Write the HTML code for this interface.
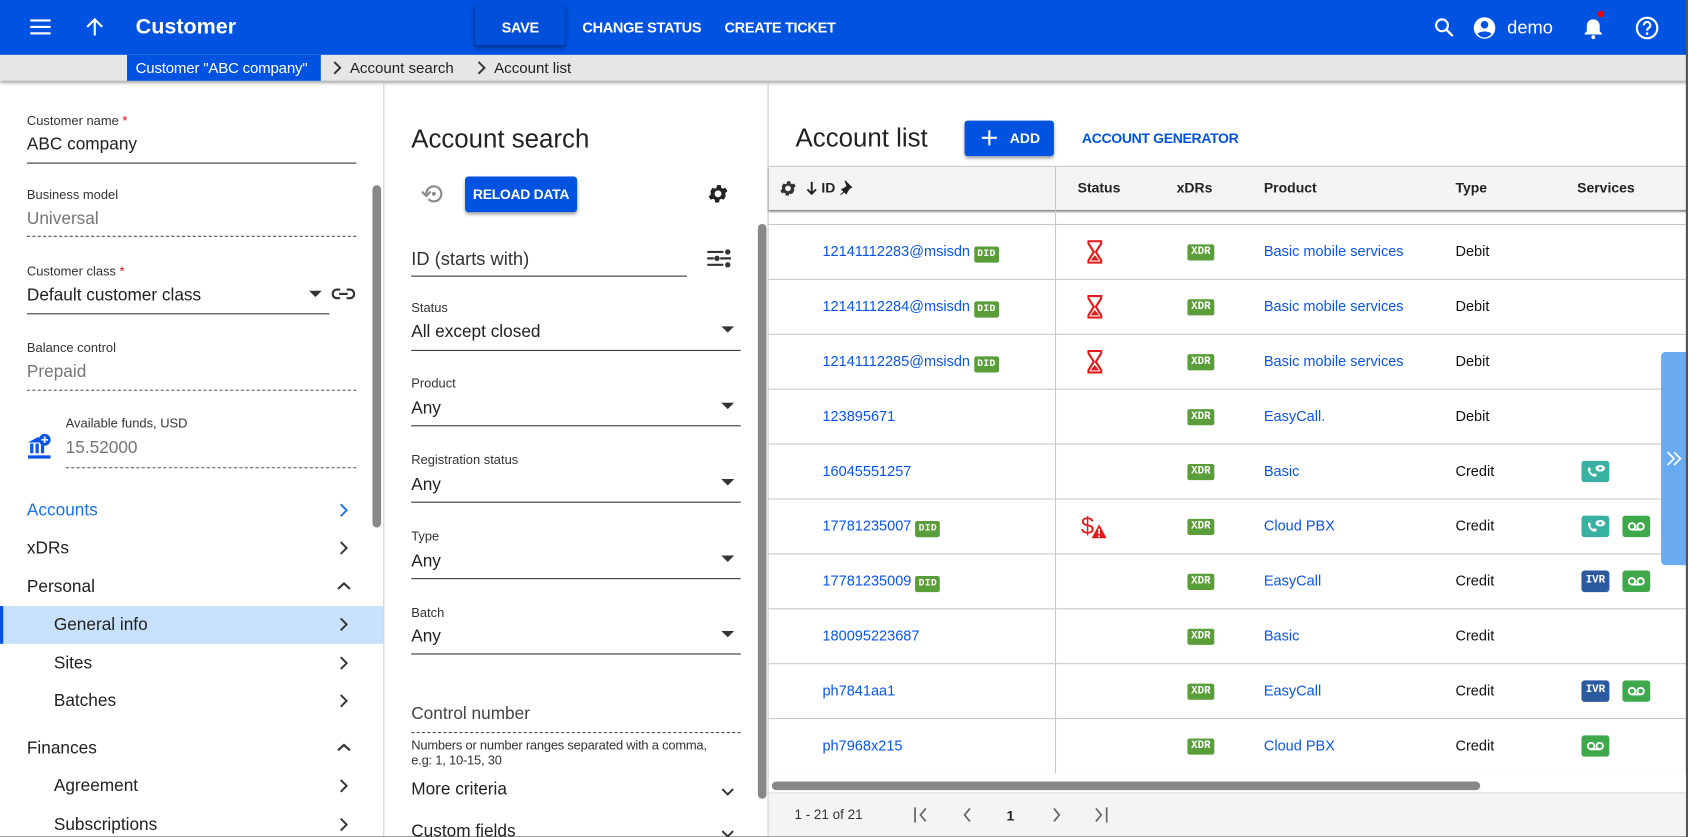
<!DOCTYPE html>
<html><head><meta charset="utf-8"><style>
html,body{margin:0;padding:0;width:1688px;height:837px;overflow:hidden;background:#fff}
#w{position:absolute;left:0;top:0;width:1568px;height:777.5px;transform:scale(1.07653);transform-origin:0 0;font-family:"Liberation Sans",Arial,sans-serif;color:#212121;overflow:hidden;border-bottom:1px solid #555;box-sizing:border-box}
.a{position:absolute;white-space:nowrap}
.top{left:0;top:0;width:1568px;height:51px;background:#0052e0}
.w{color:#fff}
.tb{font-size:13.5px;font-weight:bold;color:#fff;top:18px;letter-spacing:-.3px}
.lbl{font-size:12px;color:#333}
.val{font-size:16px;color:#212121}
.gv{font-size:16px;color:#757575}
.ul{height:1px;background:#333}
.dl{height:0;border-top:1px dashed #555}
.mi{font-size:16px}
.hd{font-size:13px;font-weight:bold;color:#222;top:167px}
.link{color:#0a55e8;font-size:13.5px}
.t{font-size:13.5px;color:#111}
.rl{left:714px;width:854px;height:1px;background:#c8c8c8}
.badge{display:inline-block;background:#5a9e3a;color:#fff;font-size:9px;font-weight:bold;font-family:"Liberation Mono",monospace;border-radius:2px;padding:2px 3px;letter-spacing:.3px;line-height:11px;vertical-align:0}
.xdr{width:25px;height:15px;background:#5a9e3a;color:#fff;font:bold 10px "Liberation Mono",monospace;text-align:center;line-height:15px;border-radius:2px}
</style></head><body><div id="w">
<svg width="0" height="0" style="position:absolute"><defs>
<symbol id="cr" viewBox="0 0 10 14"><path d="M2.5 1.5l5.5 5.5-5.5 5.5" stroke="#333" stroke-width="1.8" fill="none"/></symbol>
<symbol id="crb" viewBox="0 0 10 14"><path d="M2.5 1.5l5.5 5.5-5.5 5.5" stroke="#1a73e8" stroke-width="1.8" fill="none"/></symbol>
<symbol id="tri" viewBox="0 0 12 6"><path d="M0 0h12L6 6z" fill="#333"/></symbol>
<symbol id="vm" viewBox="0 0 26 20"><rect width="26" height="20" rx="3" fill="#3ea84a"/><circle cx="9" cy="10" r="3" stroke="#fff" stroke-width="1.8" fill="none"/><circle cx="17" cy="10" r="3" stroke="#fff" stroke-width="1.8" fill="none"/><path d="M9 13h8" stroke="#fff" stroke-width="1.8"/></symbol>
<symbol id="ph" viewBox="0 0 26 20"><rect width="26" height="20" rx="3" fill="#38b0a2"/><path d="M6 7c0 4 3 8 7 8l1.5-2-2.5-1.5-1 1c-1.5-.7-2.5-2-3-3l1-1L7.5 6z" fill="#fff"/><ellipse cx="17.5" cy="7" rx="4.5" ry="3" fill="#fff"/><circle cx="17.5" cy="7" r="1.3" fill="#38b0a2"/></symbol>
<symbol id="hg" viewBox="0 0 14 22"><path d="M1 1h12v2l-5 8 5 8v2H1v-2l5-8-5-8z" fill="none" stroke="#e31b1b" stroke-width="2"/><path d="M3 19l4-5 4 5z" fill="#e31b1b"/></symbol>
</defs></svg>
<div class="a top"></div>
<svg class="a" style="left:28px;top:17px" width="20" height="16"><rect y="1" width="19" height="2" fill="#fff"/><rect y="7" width="19" height="2" fill="#fff"/><rect y="13" width="19" height="2" fill="#fff"/></svg>
<svg class="a" style="left:79px;top:16px" width="18" height="18"><path d="M9 17V2M2 9l7-7 7 7" stroke="#fff" stroke-width="2" fill="none"/></svg>
<div class="a w" style="left:126px;top:14px;font-size:20px;font-weight:bold">Customer</div>
<div class="a" style="left:441px;top:3px;width:84px;height:39px;background:#004fd8;border-radius:3px;box-shadow:0 2px 4px rgba(0,0,0,.45)"></div>
<div class="a tb" style="left:466px">SAVE</div>
<div class="a tb" style="left:541px">CHANGE STATUS</div>
<div class="a tb" style="left:673px">CREATE TICKET</div>
<svg class="a" style="left:1332px;top:16px" width="19" height="19"><circle cx="7.5" cy="7.5" r="5.5" stroke="#fff" stroke-width="2" fill="none"/><path d="M11.5 11.5l6 6" stroke="#fff" stroke-width="2.2"/></svg>
<svg class="a" style="left:1368px;top:15px" width="22" height="22"><circle cx="11" cy="11" r="10" fill="#fff"/><circle cx="11" cy="8" r="3.5" fill="#0052e0"/><path d="M4.5 16.5c2-3 11-3 13 0a8 8 0 0 1-13 0z" fill="#0052e0"/></svg>
<div class="a w" style="left:1400px;top:16px;font-size:17px">demo</div>
<svg class="a" style="left:1470px;top:8px" width="22" height="30"><path d="M10 10c-4 0-6 3-6 6v5l-2 2v1h16v-1l-2-2v-5c0-3-2-6-6-6z" fill="#fff"/><circle cx="10" cy="26.5" r="1.8" fill="#fff"/><circle cx="17" cy="5" r="3" fill="#e00"/></svg>
<svg class="a" style="left:1519px;top:15px" width="22" height="22"><circle cx="11" cy="11" r="9.5" stroke="#fff" stroke-width="2" fill="none"/><path d="M8 8.5a3 3 0 1 1 4.5 2.5c-1.2.7-1.5 1.2-1.5 2.5" stroke="#fff" stroke-width="2" fill="none"/><circle cx="11" cy="16.2" r="1.2" fill="#fff"/></svg>
<div class="a" style="left:0;top:51px;width:1568px;height:24px;background:#e6e6e6;box-shadow:0 2px 3px rgba(0,0,0,.35)"></div>
<div class="a" style="left:118px;top:51px;width:180px;height:24px;background:#0052e0"></div>
<div class="a" style="left:126px;top:55px;font-size:14px;color:#fff;letter-spacing:-.2px">Customer "ABC company"</div>
<svg class="a" style="left:308px;top:56px" width="10" height="14"><use href="#cr"/></svg>
<div class="a" style="left:325px;top:55px;font-size:14px;color:#222">Account search</div>
<svg class="a" style="left:442px;top:56px" width="10" height="14"><use href="#cr"/></svg>
<div class="a" style="left:459px;top:55px;font-size:14px;color:#222">Account list</div>

<div class="a lbl" style="left:25px;top:105px">Customer name <span style="color:#d00">*</span></div>
<div class="a val" style="left:25px;top:126px">ABC company</div>
<div class="a ul" style="left:25px;top:151px;width:306px"></div>
<div class="a lbl" style="left:25px;top:174px">Business model</div>
<div class="a gv" style="left:25px;top:195px">Universal</div>
<div class="a dl" style="left:25px;top:219px;width:306px"></div>
<div class="a lbl" style="left:25px;top:245px">Customer class <span style="color:#d00">*</span></div>
<div class="a val" style="left:25px;top:266px">Default customer class</div>
<svg class="a" style="left:287px;top:270px" width="12" height="6"><use href="#tri"/></svg>
<svg class="a" style="left:308px;top:266px" width="22" height="14"><path d="M8 3H5a4 4 0 0 0 0 8h3M14 3h3a4 4 0 0 1 0 8h-3M7 7h8" stroke="#333" stroke-width="2" fill="none"/></svg>
<div class="a ul" style="left:25px;top:291px;width:281px"></div>
<div class="a lbl" style="left:25px;top:316px">Balance control</div>
<div class="a gv" style="left:25px;top:337px">Prepaid</div>
<div class="a dl" style="left:25px;top:362px;width:306px"></div>
<svg class="a" style="left:25px;top:402px" width="24" height="26"><path d="M1 9l9-5 4 2v3z" fill="#0a55e8"/><rect x="3" y="10" width="3" height="9" fill="#0a55e8"/><rect x="8" y="10" width="3" height="9" fill="#0a55e8"/><rect x="13" y="11" width="3" height="8" fill="#0a55e8"/><rect x="1" y="21" width="21" height="3" fill="#0a55e8"/><circle cx="16.5" cy="6.5" r="5.5" fill="#0a55e8"/><path d="M16.5 3.5v6M13.5 6.5h6" stroke="#fff" stroke-width="1.5"/></svg>
<div class="a lbl" style="left:61px;top:386px">Available funds, USD</div>
<div class="a gv" style="left:61px;top:408px">15.52000</div>
<div class="a dl" style="left:61px;top:434px;width:270px"></div>
<div class="a mi" style="left:25px;top:466px;color:#1a73e8">Accounts</div>
<svg class="a" style="left:314px;top:467px" width="10" height="14"><use href="#crb"/></svg>
<div class="a mi" style="left:25px;top:501px">xDRs</div><svg class="a" style="left:314px;top:502px" width="10" height="14"><use href="#cr"/></svg>
<div class="a mi" style="left:25px;top:537px">Personal</div><svg class="a" style="left:313px;top:540px" width="13" height="9"><path d="M1 7l5.5-5 5.5 5" stroke="#333" stroke-width="2" fill="none"/></svg>
<div class="a" style="left:0;top:563px;width:356px;height:35px;background:#c6e1f9"></div>
<div class="a" style="left:0;top:563px;width:3px;height:35px;background:#0052e0"></div>
<div class="a mi" style="left:50px;top:572px">General info</div><svg class="a" style="left:314px;top:573px" width="10" height="14"><use href="#cr"/></svg>
<div class="a mi" style="left:50px;top:608px">Sites</div><svg class="a" style="left:314px;top:609px" width="10" height="14"><use href="#cr"/></svg>
<div class="a mi" style="left:50px;top:643px">Batches</div><svg class="a" style="left:314px;top:644px" width="10" height="14"><use href="#cr"/></svg>
<div class="a mi" style="left:25px;top:687px">Finances</div><svg class="a" style="left:313px;top:690px" width="13" height="9"><path d="M1 7l5.5-5 5.5 5" stroke="#333" stroke-width="2" fill="none"/></svg>
<div class="a mi" style="left:50px;top:722px">Agreement</div><svg class="a" style="left:314px;top:723px" width="10" height="14"><use href="#cr"/></svg>
<div class="a mi" style="left:50px;top:758px">Subscriptions</div><svg class="a" style="left:314px;top:759px" width="10" height="14"><use href="#cr"/></svg>
<div class="a" style="left:346px;top:172px;width:8px;height:318px;background:#888;border-radius:4px"></div>

<div class="a" style="left:356px;top:76px;width:1px;height:702px;background:#d0d0d0"></div>
<div class="a" style="left:382px;top:116px;font-size:24px;color:#222">Account search</div>
<svg class="a" style="left:390px;top:169px" width="24" height="22"><path d="M6 11a7 7 0 1 1 2 5" stroke="#888" stroke-width="2" fill="none"/><path d="M2 9l4 4 4-4" stroke="#888" stroke-width="2" fill="none"/><circle cx="13" cy="11" r="1.8" fill="#888"/></svg>
<div class="a" style="left:432px;top:164px;width:104px;height:33px;background:#0052e0;border-radius:3px;box-shadow:0 2px 3px rgba(0,0,0,.35);color:#fff;font-size:13px;font-weight:bold;text-align:center;line-height:33px;letter-spacing:-.3px">RELOAD DATA</div>
<svg class="a" style="left:656px;top:169px" width="22" height="22" viewBox="0 0 24 24"><path fill="#222" d="M19.4 13a7.5 7.5 0 0 0 0-2l2.1-1.6-2-3.5-2.5 1a7.3 7.3 0 0 0-1.7-1l-.4-2.7h-4l-.4 2.7a7.3 7.3 0 0 0-1.7 1l-2.5-1-2 3.5L4.6 11a7.5 7.5 0 0 0 0 2l-2.1 1.6 2 3.5 2.5-1a7.3 7.3 0 0 0 1.7 1l.4 2.7h4l.4-2.7a7.3 7.3 0 0 0 1.7-1l2.5 1 2-3.5zM12 15.5a3.5 3.5 0 1 1 0-7 3.5 3.5 0 0 1 0 7z"/></svg>
<div class="a" style="left:382px;top:231px;font-size:17px;color:#333">ID (starts with)</div>
<div class="a ul" style="left:382px;top:256px;width:256px"></div>
<svg class="a" style="left:656px;top:230px" width="24" height="20"><path d="M1 4h15M1 10h6M13 10h10M1 16h15" stroke="#333" stroke-width="2"/><circle cx="20" cy="4" r="2.5" fill="#333"/><circle cx="10" cy="10" r="2.5" fill="#333"/><circle cx="20" cy="16" r="2.5" fill="#333"/></svg>
<div class="a lbl" style="left:382px;top:279px">Status</div><div class="a val" style="left:382px;top:300px">All except closed</div><svg class="a" style="left:670px;top:303px" width="12" height="6"><use href="#tri"/></svg><div class="a ul" style="left:382px;top:325px;width:306px"></div>
<div class="a lbl" style="left:382px;top:349px">Product</div><div class="a val" style="left:382px;top:371px">Any</div><svg class="a" style="left:670px;top:374px" width="12" height="6"><use href="#tri"/></svg><div class="a ul" style="left:382px;top:395px;width:306px"></div>
<div class="a lbl" style="left:382px;top:420px">Registration status</div><div class="a val" style="left:382px;top:442px">Any</div><svg class="a" style="left:670px;top:445px" width="12" height="6"><use href="#tri"/></svg><div class="a ul" style="left:382px;top:466px;width:306px"></div>
<div class="a lbl" style="left:382px;top:491px">Type</div><div class="a val" style="left:382px;top:513px">Any</div><svg class="a" style="left:670px;top:516px" width="12" height="6"><use href="#tri"/></svg><div class="a ul" style="left:382px;top:537px;width:306px"></div>
<div class="a lbl" style="left:382px;top:562px">Batch</div><div class="a val" style="left:382px;top:583px">Any</div><svg class="a" style="left:670px;top:586px" width="12" height="6"><use href="#tri"/></svg><div class="a ul" style="left:382px;top:607px;width:306px"></div>
<div class="a" style="left:382px;top:655px;font-size:16px;color:#444">Control number</div>
<div class="a dl" style="left:382px;top:680px;width:306px"></div>
<div class="a" style="left:382px;top:685px;font-size:12px;color:#333;line-height:14px;letter-spacing:-.2px">Numbers or number ranges separated with a comma,<br>e.g: 1, 10-15, 30</div>
<div class="a val" style="left:382px;top:725px">More criteria</div><svg class="a" style="left:670px;top:732px" width="12" height="8"><path d="M1 1l5 5 5-5" stroke="#333" stroke-width="1.8" fill="none"/></svg>
<div class="a val" style="left:382px;top:764px">Custom fields</div><svg class="a" style="left:670px;top:771px" width="12" height="8"><path d="M1 1l5 5 5-5" stroke="#333" stroke-width="1.8" fill="none"/></svg>
<div class="a" style="left:704px;top:208px;width:8px;height:534px;background:#888;border-radius:4px"></div>
<div class="a" style="left:713px;top:76px;width:1px;height:702px;background:#c8c8c8"></div>

<div class="a" style="left:739px;top:115px;font-size:24px;color:#222">Account list</div>
<div class="a" style="left:896px;top:112px;width:83px;height:33px;background:#0052e0;border-radius:3px;box-shadow:0 2px 3px rgba(0,0,0,.35)"></div>
<svg class="a" style="left:911px;top:120px" width="16" height="16"><path d="M8 1v14M1 8h14" stroke="#fff" stroke-width="2"/></svg>
<div class="a" style="left:938px;top:121px;font-size:13px;font-weight:bold;color:#fff">ADD</div>
<div class="a" style="left:1005px;top:121px;font-size:13px;font-weight:bold;color:#0052e0;letter-spacing:-.3px">ACCOUNT GENERATOR</div>
<div class="a" style="left:714px;top:154px;width:854px;height:40px;background:#f4f4f4;border-top:1px solid #c8c8c8;box-shadow:0 2px 2px rgba(0,0,0,.5)"></div>
<svg class="a" style="left:723px;top:166px" width="18" height="18" viewBox="0 0 24 24"><path fill="#333" d="M19.4 13a7.5 7.5 0 0 0 0-2l2.1-1.6-2-3.5-2.5 1a7.3 7.3 0 0 0-1.7-1l-.4-2.7h-4l-.4 2.7a7.3 7.3 0 0 0-1.7 1l-2.5-1-2 3.5L4.6 11a7.5 7.5 0 0 0 0 2l-2.1 1.6 2 3.5 2.5-1a7.3 7.3 0 0 0 1.7 1l.4 2.7h4l.4-2.7a7.3 7.3 0 0 0 1.7 1l2.5-1 2-3.5zM12 15.5a3.5 3.5 0 1 1 0-7 3.5 3.5 0 0 1 0 7z"/></svg>
<svg class="a" style="left:749px;top:168px" width="12" height="14"><path d="M5 1v11M1 8l4 4 4-4" stroke="#222" stroke-width="1.8" fill="none"/></svg>
<div class="a hd" style="left:763px">ID</div>
<svg class="a" style="left:778px;top:167px" width="14" height="14"><path d="M7 1l6 6-2 1-2 3-1 2-2-2-4 4 4-4-2-2 2-1 3-2z" fill="#222" stroke="#222" stroke-width="1"/></svg>
<div class="a hd" style="left:1001px">Status</div>
<div class="a hd" style="left:1093px">xDRs</div>
<div class="a hd" style="left:1174px">Product</div>
<div class="a hd" style="left:1352px">Type</div>
<div class="a hd" style="left:1465px">Services</div>
<div class="a" style="left:980px;top:154px;width:1px;height:564px;background:#c8c8c8"></div>
<div class="a rl" style="top:208px"></div><div class="a rl" style="top:259px"></div><div class="a rl" style="top:310px"></div><div class="a rl" style="top:361px"></div><div class="a rl" style="top:412px"></div><div class="a rl" style="top:463px"></div><div class="a rl" style="top:514px"></div><div class="a rl" style="top:565px"></div><div class="a rl" style="top:616px"></div><div class="a rl" style="top:667px"></div><div class="a rl" style="top:718px"></div>

<div class="a link" style="left:764px;top:226px">12141112283@msisdn <span class="badge">DID</span></div>
<div class="a link" style="left:764px;top:277px">12141112284@msisdn <span class="badge">DID</span></div>
<div class="a link" style="left:764px;top:328px">12141112285@msisdn <span class="badge">DID</span></div>
<div class="a link" style="left:764px;top:379px">123895671</div>
<div class="a link" style="left:764px;top:430px">16045551257</div>
<div class="a link" style="left:764px;top:481px">17781235007 <span class="badge">DID</span></div>
<div class="a link" style="left:764px;top:532px">17781235009 <span class="badge">DID</span></div>
<div class="a link" style="left:764px;top:583px">180095223687</div>
<div class="a link" style="left:764px;top:634px">ph7841aa1</div>
<div class="a link" style="left:764px;top:685px">ph7968x215</div>

<svg class="a" style="left:1010px;top:223px" width="14" height="22"><use href="#hg"/></svg>
<svg class="a" style="left:1010px;top:274px" width="14" height="22"><use href="#hg"/></svg>
<svg class="a" style="left:1010px;top:325px" width="14" height="22"><use href="#hg"/></svg>
<div class="a" style="left:1004px;top:476px;font-size:22px;color:#e31b1b">$</div>
<svg class="a" style="left:1013px;top:486px" width="16" height="15"><path d="M8 1l7 13H1z" fill="#e31b1b"/><path d="M8 5v5M8 11.5v1.5" stroke="#fff" stroke-width="1.6"/></svg>

<div class="a xdr" style="left:1103px;top:227px">XDR</div>
<div class="a xdr" style="left:1103px;top:278px">XDR</div>
<div class="a xdr" style="left:1103px;top:329px">XDR</div>
<div class="a xdr" style="left:1103px;top:380px">XDR</div>
<div class="a xdr" style="left:1103px;top:431px">XDR</div>
<div class="a xdr" style="left:1103px;top:482px">XDR</div>
<div class="a xdr" style="left:1103px;top:533px">XDR</div>
<div class="a xdr" style="left:1103px;top:584px">XDR</div>
<div class="a xdr" style="left:1103px;top:635px">XDR</div>
<div class="a xdr" style="left:1103px;top:686px">XDR</div>

<div class="a link" style="left:1174px;top:226px">Basic mobile services</div>
<div class="a link" style="left:1174px;top:277px">Basic mobile services</div>
<div class="a link" style="left:1174px;top:328px">Basic mobile services</div>
<div class="a link" style="left:1174px;top:379px">EasyCall.</div>
<div class="a link" style="left:1174px;top:430px">Basic</div>
<div class="a link" style="left:1174px;top:481px">Cloud PBX</div>
<div class="a link" style="left:1174px;top:532px">EasyCall</div>
<div class="a link" style="left:1174px;top:583px">Basic</div>
<div class="a link" style="left:1174px;top:634px">EasyCall</div>
<div class="a link" style="left:1174px;top:685px">Cloud PBX</div>

<div class="a t" style="left:1352px;top:226px">Debit</div>
<div class="a t" style="left:1352px;top:277px">Debit</div>
<div class="a t" style="left:1352px;top:328px">Debit</div>
<div class="a t" style="left:1352px;top:379px">Debit</div>
<div class="a t" style="left:1352px;top:430px">Credit</div>
<div class="a t" style="left:1352px;top:481px">Credit</div>
<div class="a t" style="left:1352px;top:532px">Credit</div>
<div class="a t" style="left:1352px;top:583px">Credit</div>
<div class="a t" style="left:1352px;top:634px">Credit</div>
<div class="a t" style="left:1352px;top:685px">Credit</div>

<svg class="a" style="left:1469px;top:428px" width="26" height="20"><use href="#ph"/></svg>
<svg class="a" style="left:1469px;top:479px" width="26" height="20"><use href="#ph"/></svg>
<svg class="a" style="left:1507px;top:479px" width="26" height="20"><use href="#vm"/></svg>
<div class="a" style="left:1469px;top:530px;width:26px;height:20px;border-radius:3px;background:#2b5a9e;color:#fff;font:bold 10px 'Liberation Mono',monospace;text-align:center;line-height:20px">IVR</div>
<svg class="a" style="left:1507px;top:530px" width="26" height="20"><use href="#vm"/></svg>
<div class="a" style="left:1469px;top:632px;width:26px;height:20px;border-radius:3px;background:#2b5a9e;color:#fff;font:bold 10px 'Liberation Mono',monospace;text-align:center;line-height:20px">IVR</div>
<svg class="a" style="left:1507px;top:632px" width="26" height="20"><use href="#vm"/></svg>
<svg class="a" style="left:1469px;top:683px" width="26" height="20"><use href="#vm"/></svg>

<div class="a" style="left:1543px;top:327px;width:26px;height:198px;background:#69aaf0;border-radius:4px 0 0 4px"></div>
<svg class="a" style="left:1547px;top:418px" width="16" height="16"><path d="M2 2l6 6-6 6M8 2l6 6-6 6" stroke="#fff" stroke-width="1.6" fill="none"/></svg>
<div class="a" style="left:1566px;top:0;width:2px;height:778px;background:#555"></div>

<div class="a" style="left:714px;top:718px;width:852px;height:18px;background:#fff"></div>
<div class="a" style="left:717px;top:726px;width:658px;height:8px;background:#888;border-radius:4px"></div>
<div class="a" style="left:714px;top:736px;width:852px;height:42px;background:#f4f4f4;border-top:1px solid #ddd"></div>
<div class="a" style="left:738px;top:750px;font-size:12.5px;color:#333">1 - 21 of 21</div>
<svg class="a" style="left:848px;top:749px" width="16" height="16"><path d="M2 1v14M12 2L7 8l5 6" stroke="#666" stroke-width="1.6" fill="none"/></svg>
<svg class="a" style="left:892px;top:749px" width="12" height="16"><path d="M9 2L4 8l5 6" stroke="#666" stroke-width="1.6" fill="none"/></svg>
<div class="a" style="left:935px;top:750px;font-size:13px;font-weight:bold;color:#222">1</div>
<svg class="a" style="left:976px;top:749px" width="12" height="16"><path d="M3 2l5 6-5 6" stroke="#666" stroke-width="1.6" fill="none"/></svg>
<svg class="a" style="left:1014px;top:749px" width="16" height="16"><path d="M14 1v14M4 2l5 6-5 6" stroke="#666" stroke-width="1.6" fill="none"/></svg>
</div></body></html>
